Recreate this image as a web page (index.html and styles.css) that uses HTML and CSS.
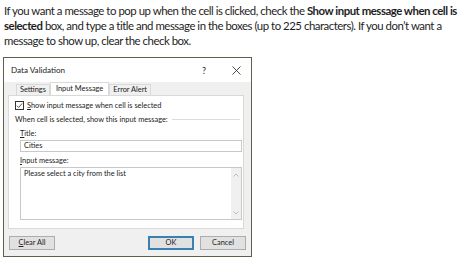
FILE: index.html
```html
<!DOCTYPE html>
<html>
<head>
<meta charset="utf-8">
<link rel="stylesheet" href="styles.css">
</head>
<body>
<p class="intro">If you want a message to pop up when the cell is clicked, check the <b>Show input message when cell is selected</b> box, and type a title and message in the boxes (up to 225 characters). If you don’t want a message to show up, clear the check box.</p>
<div class="dialog">
  <div class="titlebar">
    <span class="title">Data Validation</span>
    <span class="help">?</span>
    <span class="close">
      <svg width="9" height="9" viewBox="0 0 9 9"><path d="M0.5 0.5L8.5 8.5M8.5 0.5L0.5 8.5" stroke="#333" stroke-width="0.9" fill="none"/></svg>
    </span>
  </div>
  <div class="body">
    <div class="tabs">
      <span class="tab">Settings</span>
      <span class="tab active">Input Message</span>
      <span class="tab">Error Alert</span>
    </div>
    <div class="panel">
      <label class="check">
        <span class="box"><svg width="8" height="8" viewBox="0 0 8 8"><path d="M1 4.2L3 6.2L7 1.6" stroke="#222" stroke-width="0.9" fill="none"/></svg></span>
        <span><u>S</u>how input message when cell is selected</span>
      </label>
      <div class="group">
        <span>When cell is selected, show this input message:</span>
        <span class="rule"></span>
      </div>
      <div class="fields">
        <div class="lbl"><u>T</u>itle:</div>
        <div class="input">Cities</div>
        <div class="lbl"><u>I</u>nput message:</div>
        <div class="textarea">
          <div class="ta-text">Please select a city from the list</div>
          <div class="scroll">
            <svg width="6" height="4" viewBox="0 0 6 4"><path d="M0.5 3.5L3 1L5.5 3.5" stroke="#b8b8b8" stroke-width="0.9" fill="none"/></svg>
            <svg width="6" height="4" viewBox="0 0 6 4"><path d="M0.5 0.5L3 3L5.5 0.5" stroke="#b8b8b8" stroke-width="0.9" fill="none"/></svg>
          </div>
        </div>
      </div>
    </div>
    <div class="buttons">
      <span class="btn"><u>C</u>lear All</span>
      <span class="spacer"></span>
      <span class="btn ok">OK</span>
      <span class="btn">Cancel</span>
    </div>
  </div>
</div>
</body>
</html>
```
FILE: styles.css
```css
html, body {
  margin: 0;
  padding: 0;
  background: #ffffff;
}
body {
  font-family: "Lato", "Open Sans", sans-serif;
  color: #1e1e1e;
}
.intro {
  margin: 0;
  padding: 3px 4px 0 4px;
  font-size: 11.4px;
  letter-spacing: -0.47px;
  line-height: 15px;
  width: 466px;
}
.intro b {
  font-weight: 700;
}
.dialog {
  margin: 9px 0 0 3px;
  width: 247px;
  height: 198px;
  border: 1px solid #5f5f50;
  background: #f0f0f0;
  display: flex;
  flex-direction: column;
  font-size: 7.4px;
  color: #222;
}
.titlebar {
  height: 24px;
  background: #ffffff;
  display: flex;
  align-items: center;
  padding-left: 7px;
  font-size: 8.1px;
}
.title {
  flex: 1;
}
.help {
  width: 12px;
  margin-right: 18px;
  font-size: 9px;
}
.close {
  width: 9px;
  margin-right: 10px;
  display: flex;
}
.body {
  flex: 1;
  display: flex;
  flex-direction: column;
  padding: 3px 5px 0 4px;
}
.tabs {
  display: flex;
  align-items: flex-end;
  padding-left: 8px;
  height: 10px;
}
.tab {
  height: 10px;
  line-height: 10px;
  padding: 0 3px;
  border: 1px solid #d9d9d9;
  border-bottom: none;
  background: #f0f0f0;
  margin-right: 1px;
}
.tab.active {
  background: #ffffff;
  height: 12px;
  line-height: 12px;
  padding: 0 5px;
  margin-left: -1px;
  margin-right: 0;
  position: relative;
  z-index: 1;
}
.panel {
  background: #ffffff;
  border: 1px solid #d9d9d9;
  height: 134px;
  margin-right: 2px;
  padding: 4px 1px 0 6px;
  box-sizing: border-box;
  display: flex;
  flex-direction: column;
}
.check {
  display: flex;
  align-items: center;
  gap: 3px;
  height: 11px;
}
.box {
  width: 7px;
  height: 7px;
  border: 1px solid #333;
  display: flex;
  align-items: center;
  justify-content: center;
  background: #fff;
}
.box svg {
  width: 7px;
  height: 7px;
}
.group {
  display: flex;
  align-items: center;
  gap: 4px;
  margin-top: 2px;
  height: 12px;
}
.rule {
  flex: 1;
  height: 1px;
  background: #dcdcdc;
  margin-right: 2px;
}
.fields {
  padding-left: 5px;
  padding-right: 0;
}
.lbl {
  height: 12px;
  line-height: 12px;
  margin-top: 3px;
}
.input {
  height: 10px;
  border: 1px solid #c8c8c8;
  line-height: 10px;
  padding-left: 3px;
}
.textarea {
  height: 51px;
  border: 1px solid #c8c8c8;
  display: flex;
}
.ta-text {
  flex: 1;
  padding: 1px 3px;
}
.scroll {
  width: 10px;
  background: #f0f0f0;
  display: flex;
  flex-direction: column;
  justify-content: space-between;
  align-items: center;
  padding: 5px 0 4px 0;
}
.buttons {
  display: flex;
  align-items: center;
  margin-top: 7px;
  padding-left: 1px;
  gap: 6px;
}
.spacer {
  flex: 1;
}
.btn {
  width: 44px;
  height: 12px;
  line-height: 12px;
  text-align: center;
  background: #e1e1e1;
  border: 1px solid #adadad;
}
.btn.ok {
  border-color: #3c7fb1;
  box-shadow: inset 0 0 0 1px #3c7fb1;
}
```
